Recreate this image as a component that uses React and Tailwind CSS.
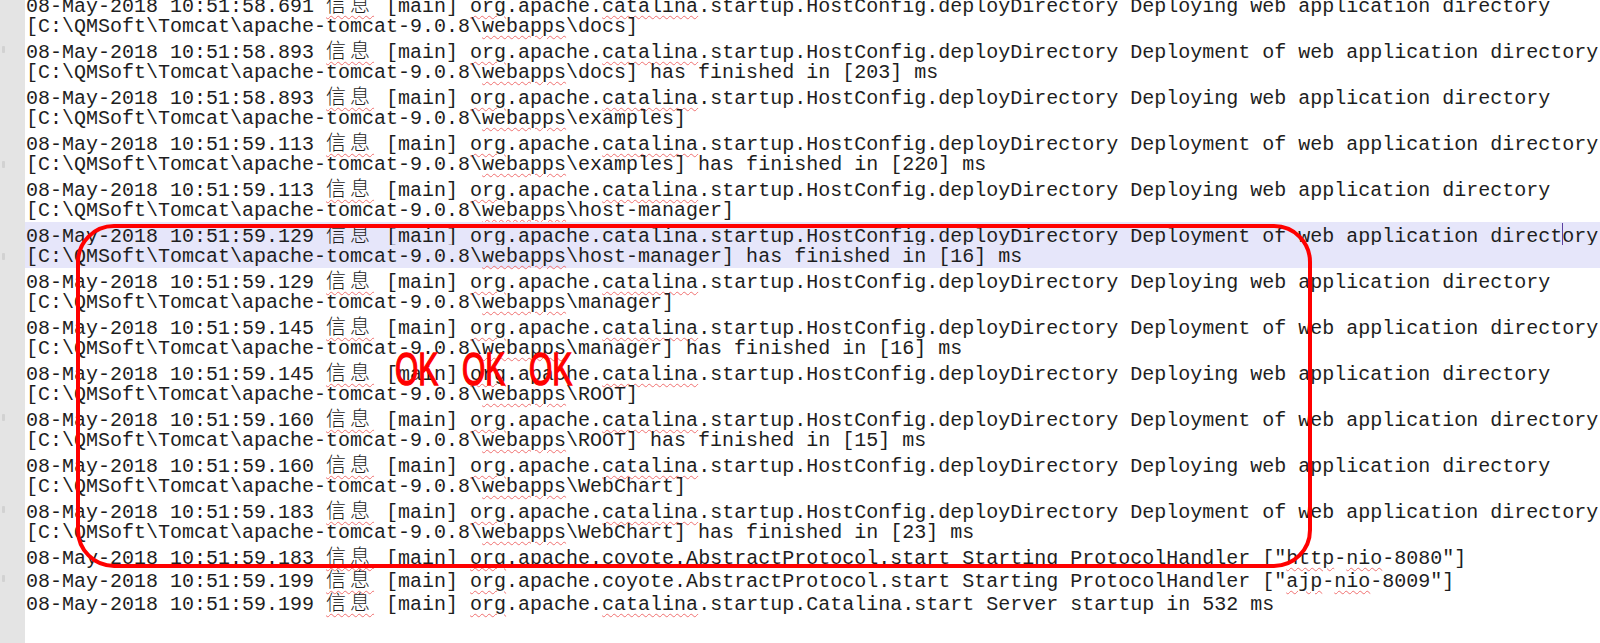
import React from "react";

const PRE = "08-May-2018 10:51:";
const PATH = "[C:\\QMSoft\\Tomcat\\apache-tomcat-9.0.8\\webapps\\";
const HC = " [main] org.apache.catalina.startup.HostConfig.deployDirectory ";

function buildLines() {
  const data = [
    ["docs", "58.691", "58.893", 203],
    ["examples", "58.893", "59.113", 220],
    ["host-manager", "59.113", "59.129", 16],
    ["manager", "59.129", "59.145", 16],
    ["ROOT", "59.145", "59.160", 15],
    ["WebChart", "59.160", "59.183", 23],
  ];
  const lines = [];
  data.forEach(([d, t1, t2, ms]) => {
    lines.push(`${PRE}${t1} 信息${HC}Deploying web application directory`);
    lines.push(`${PATH}${d}]`);
    lines.push(`${PRE}${t2} 信息${HC}Deployment of web application directory`);
    lines.push(`${PATH}${d}] has finished in [${ms}] ms`);
  });
  lines.push(`${PRE}59.183 信息 [main] org.apache.coyote.AbstractProtocol.start Starting ProtocolHandler ["http-nio-8080"]`);
  lines.push(`${PRE}59.199 信息 [main] org.apache.coyote.AbstractProtocol.start Starting ProtocolHandler ["ajp-nio-8009"]`);
  lines.push(`${PRE}59.199 信息 [main] org.apache.catalina.startup.Catalina.start Server startup in 532 ms`);
  return lines;
}

const LINES = buildLines();
const MARK_ROWS = [2, 7, 11, 18, 22, 25];

const SQ = "underline decoration-wavy decoration-[#f07070] decoration-1 underline-offset-[3px]";

function renderLine(text) {
  const parts = text.split(/(信息|org|catalina|webapps|http|nio|ajp)/);
  return parts.map((p, i) => {
    if (p === "信息") {
      return (
        <span
          key={i}
          className={`tracking-[4px] font-light ${SQ}`}
          style={{ fontFamily: '"Noto Sans CJK SC", "Liberation Mono", monospace' }}
        >
          {p}
        </span>
      );
    }
    if (i % 2 === 1) {
      return (
        <span key={i} className={SQ}>
          {p}
        </span>
      );
    }
    return <React.Fragment key={i}>{p}</React.Fragment>;
  });
}

export default function App() {
  return (
    <div className="relative w-[1600px] h-[643px] overflow-hidden bg-white flex">
      <div className="w-[25px] shrink-0 bg-[#e4e4e4] flex flex-col mt-[-8px]">
        {LINES.map((_, i) => (
          <div key={i} className="h-[23px] shrink-0 flex items-center pl-[2px]">
            {MARK_ROWS.includes(i) && <div className="w-[3px] h-[7px] bg-[#d2d2d2] rounded-[1px]" />}
          </div>
        ))}
      </div>
      <div
        className="flex-1 flex flex-col mt-[-8px] text-[20px] leading-[23px] text-[#1e1e1e]"
        style={{ fontFamily: '"Liberation Mono", "Noto Sans CJK SC", monospace' }}
      >
        {LINES.map((l, i) => (
          <div
            key={i}
            className={`relative h-[23px] shrink-0 whitespace-pre pl-[1px] ${i === 10 || i === 11 ? "bg-[#e6e6fa]" : ""}`}
          >
            {renderLine(l)}
            {i === 10 && <div className="absolute left-[1537px] top-[1px] w-[1px] h-[22px] bg-[#5b3fa0]" />}
          </div>
        ))}
      </div>

      <div className="absolute left-[76px] top-[224px] w-[1236px] h-[344px] border-4 border-[#ff0000] rounded-[38px]" />

      <div
        className="absolute left-[395px] top-[346px] flex text-[#ff0000] text-[46px] leading-none [-webkit-text-stroke:1.5px_#ff0000]"
        style={{ fontFamily: '"Liberation Sans", Arial, sans-serif' }}
      >
        <span className="w-[67px] inline-block origin-left scale-x-[0.65]">OK</span>
        <span className="w-[67px] inline-block origin-left scale-x-[0.65]">OK</span>
        <span className="w-[67px] inline-block origin-left scale-x-[0.65]">OK</span>
      </div>
    </div>
  );
}
